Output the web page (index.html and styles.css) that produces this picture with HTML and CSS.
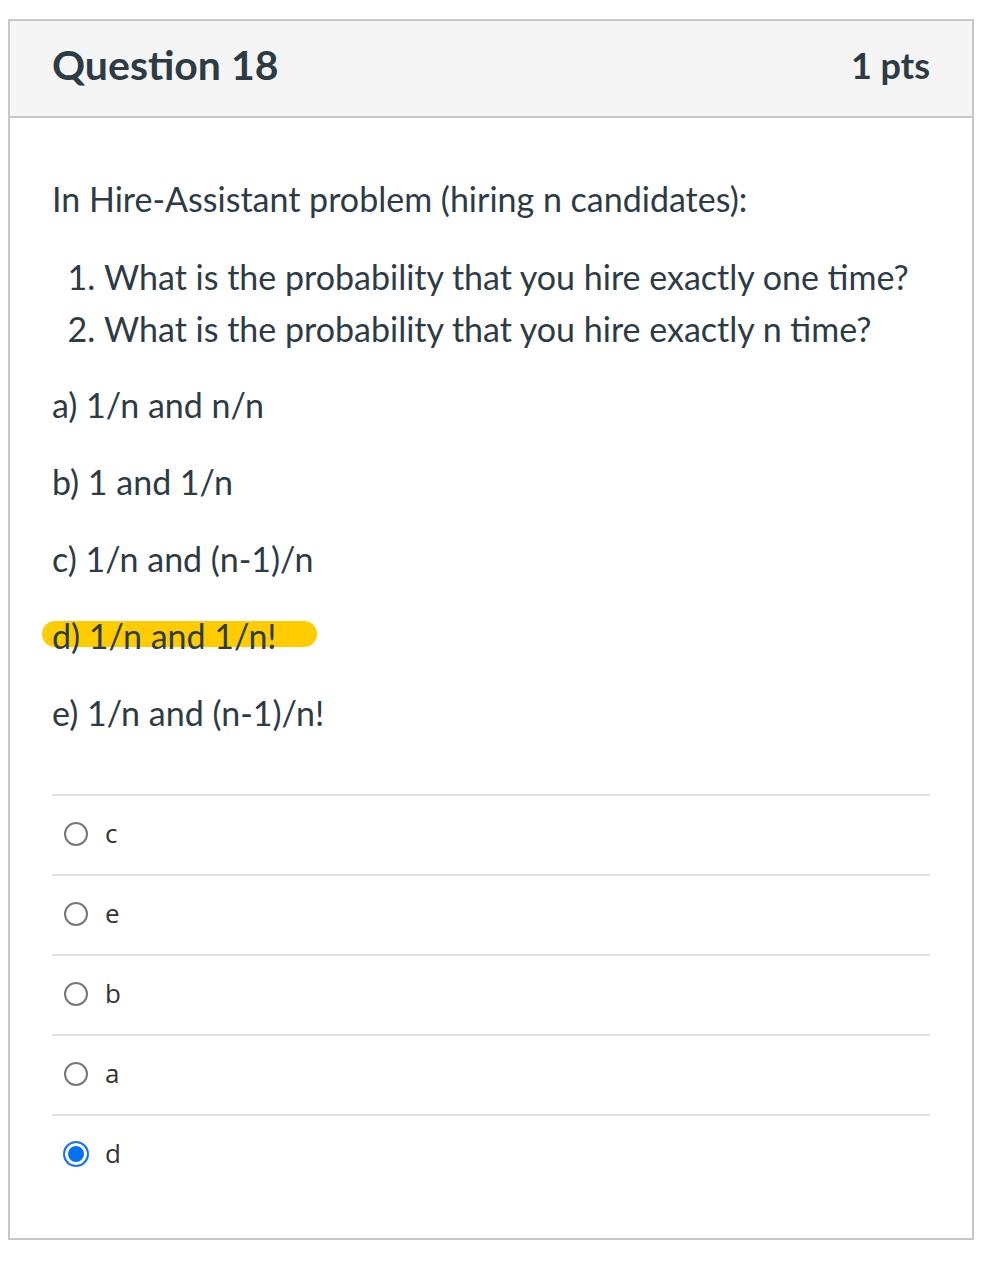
FILE: index.html
```
<!DOCTYPE html>
<html>
<head>
<meta charset="utf-8">
<link rel="stylesheet" href="styles.css">
</head>
<body>
<div class="card">
  <div class="header">
    <div class="title">Question 18</div>
    <div class="pts">1 pts</div>
  </div>
  <div class="body">
    <p class="intro">In Hire-Assistant problem (hiring n candidates):</p>
    <ol class="qs">
      <li>What is the probability that you hire exactly one time?</li>
      <li>What is the probability that you hire exactly n time?</li>
    </ol>
    <p class="opt">a) 1/n and n/n</p>
    <p class="opt">b) 1 and 1/n</p>
    <p class="opt">c) 1/n and (n-1)/n</p>
    <p class="opt"><span class="hl"><span class="mark"></span><span class="hltext">d) 1/n and 1/n!</span></span></p>
    <p class="opt">e) 1/n and (n-1)/n!</p>
    <div class="answers">
      <div class="ans"><span class="radio"></span><span class="lbl">c</span></div>
      <div class="ans"><span class="radio"></span><span class="lbl">e</span></div>
      <div class="ans"><span class="radio"></span><span class="lbl">b</span></div>
      <div class="ans"><span class="radio"></span><span class="lbl">a</span></div>
      <div class="ans"><span class="radio checked"></span><span class="lbl">d</span></div>
    </div>
  </div>
</div>
</body>
</html>
```
FILE: styles.css
```
html, body { margin: 0; padding: 0; background: #fff; }
body { font-family: Lato, "Open Sans", sans-serif; color: #2d3b45; }
.card {
  margin: 19px 0 0 8px;
  width: 966px;
  height: 1221px;
  border: 2px solid #c7c7c7;
  box-sizing: border-box;
}
.header {
  height: 97px;
  background: #f5f5f5;
  border-bottom: 2px solid #c7c7c7;
  box-sizing: border-box;
  display: flex;
  align-items: center;
  justify-content: space-between;
  padding: 0 42px 0 42px;
}
.title { font-size: 41px; font-weight: 700; margin-top: -9px; }
.pts { font-size: 36px; font-weight: 700; margin-top: -7px; }
.body { padding: 61px 42px 0 42px; }
.intro { font-size: 34px; margin: 0; line-height: 40px; }
.qs { font-size: 34px; margin: 32px 0 0 0; padding-left: 52px; line-height: 52px; }
.opt { font-size: 34px; margin: 0; line-height: 40px; margin-top: 37px; }
.qs + .opt { margin-top: 30px; }
.hl { position: relative; display: inline-block; }
.mark {
  position: absolute;
  left: -10px;
  right: -40px;
  top: 5px;
  height: 26px;
  background: #ffcc00;
  border-radius: 13px;
}
.hltext { position: relative; }
.answers { margin-top: 61px; }
.ans {
  border-top: 2px solid #e0e0e0;
  height: 80px;
  box-sizing: border-box;
  display: flex;
  align-items: center;
  padding-left: 12px;
}
.radio {
  width: 24px;
  height: 24px;
  border: 2px solid #777;
  border-radius: 50%;
  box-sizing: border-box;
  margin-right: 17px;
  margin-top: -2px;
}
.radio.checked {
  border: 2px solid #1a73e8;
  background: #0770f0;
  box-shadow: inset 0 0 0 3px #fff;
  width: 26px; height: 26px;
  margin-left: -1px;
  margin-right: 16px;
}
.lbl { font-family: "Open Sans", sans-serif; font-size: 26px; color: #333; margin-top: -4px; }
```
